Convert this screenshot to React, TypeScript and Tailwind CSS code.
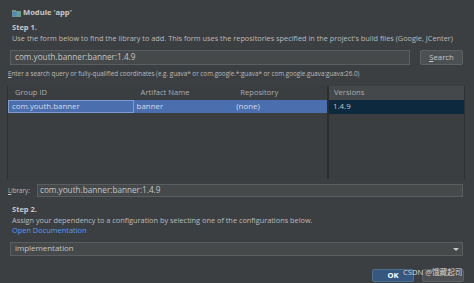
const font = "font-['Open_Sans','Noto_Sans_CJK_SC',sans-serif]"

function ModuleIcon() {
  return (
    <svg width="9" height="8" viewBox="0 0 9 8" className="shrink-0">
      <path d="M0 1h3.5l1 1H9v6H0z" fill="#6e9a8c" />
      <rect x="0.5" y="3" width="4" height="4.5" fill="#4a88c7" />
    </svg>
  )
}

function Column({ width, header, cell, focused }: { width: string; header: string; cell: string; focused?: boolean }) {
  return (
    <div className={`flex flex-col ${width}`}>
      <div className="h-[14px] flex items-center pl-[7px] text-[7.6px] text-[#a9adb0]">{header}</div>
      <div className={`h-[13px] flex items-center pl-[3px] bg-[#4b6eaf] text-[7.9px] text-[#d5dbe6] ${focused ? 'border border-[#7f9bd2]' : ''}`}>
        {cell}
      </div>
    </div>
  )
}

export default function App() {
  return (
    <div className={`relative w-[474px] h-[283px] overflow-hidden bg-[#3c3f41] text-[#bbbbbb] ${font}`}>
      <div className="mt-[6px] h-[14px] flex items-center gap-[2px] pl-[12px]">
        <ModuleIcon />
        <span className="text-[7.6px] font-bold text-[#c8c8c8]">Module 'app'</span>
      </div>

      <div className="h-[13px] mt-[1px] flex items-center pl-[12px] text-[7.5px] font-bold text-[#c8c8c8]">Step 1.</div>
      <div className="h-[8px] flex items-center pl-[12px] text-[7.35px] leading-[8px] whitespace-nowrap">
        Use the form below to find the library to add. This form uses the repositories specified in the project's build files (Google, JCenter)
      </div>

      <div className="mt-[8px] h-[15px] flex items-stretch pl-[10px] pr-[11px] gap-[10px]">
        <div className="flex-1 flex items-center border border-[#5b5e60] bg-[#45494a] pl-[4px] text-[8.2px] text-[#c4c4c4]">
          com.youth.banner:banner:1.4.9
        </div>
        <div className="w-[43px] flex items-center justify-center border border-[#5e6162] bg-[#4c5052] rounded-[2px] text-[7.8px] text-[#c4c4c4]">
          <span><span className="underline">S</span>earch</span>
        </div>
      </div>

      <div className="mt-[4px] h-[10px] flex items-center pl-[8px] text-[6.3px] whitespace-nowrap">
        <span><span className="underline">E</span>nter a search query or fully-qualified coordinates (e.g. guava* or com.google.*:guava* or com.google.guava:guava:26.0)</span>
      </div>

      <div className="mt-[7px] h-[93px] ml-[7px] w-[458px] flex">
        <div className="w-[320px] flex border-l border-[#2f3133] bg-[#3b3e40]">
          <Column width="w-[126px]" header="Group ID" cell="com.youth.banner" focused />
          <Column width="w-[100px]" header="Artifact Name" cell="banner" />
          <Column width="w-[94px]" header="Repository" cell="(none)" />
        </div>
        <div className="w-[2px] bg-[#2b2d2f]" />
        <div className="flex-1 flex flex-col border-r border-[#2f3133] bg-[#3b3e40]">
          <div className="h-[14px] flex items-center pl-[5px] bg-[#45484a] text-[7.6px] text-[#a9adb0]">Versions</div>
          <div className="h-[14px] flex items-center pl-[4px] bg-[#0d293e] text-[7.9px] text-[#c0c6cc]">1.4.9</div>
        </div>
      </div>

      <div className="mt-[5px] h-[13px] flex items-stretch pl-[8px] pr-[11px] gap-[6px]">
        <div className="flex items-center text-[6.2px] w-[23px]">
          <span><span className="underline">L</span>ibrary:</span>
        </div>
        <div className="flex-1 flex items-center border border-[#5b5e60] bg-[#45494a] pl-[2px] text-[8.2px] text-[#c4c4c4]">
          com.youth.banner:banner:1.4.9
        </div>
      </div>

      <div className="mt-[6px] h-[13px] flex items-center pl-[12px] text-[7.5px] font-bold text-[#c8c8c8]">Step 2.</div>
      <div className="h-[8px] flex items-center pl-[12px] text-[7.35px] leading-[8px] whitespace-nowrap">
        Assign your dependency to a configuration by selecting one of the configurations below.
      </div>
      <div className="mt-[2px] h-[10px] flex items-center pl-[12px] text-[7.4px] text-[#589df6]">Open Documentation</div>

      <div className="mt-[6px] mr-[11px] ml-[10px] h-[14px] flex border border-[#5b5e60] bg-[#45494a]">
        <div className="flex-1 flex items-center pl-[4px] text-[7.9px] text-[#c4c4c4]">implementation</div>
        <div className="w-[12px] flex items-center justify-center">
          <div className="w-0 h-0 border-l-[3px] border-r-[3px] border-t-[3px] border-l-transparent border-r-transparent border-t-[#c8c8c8]" />
        </div>
      </div>

      <div className="mt-[13px] h-[13px] flex justify-end gap-[8px] pr-[10px]">
        <div className="w-[42px] flex items-center justify-center rounded-[2px] bg-[#365880] border border-[#4c708c] text-[7.6px] font-bold text-white">OK</div>
        <div className="w-[42px] rounded-[2px] bg-[#4c5052] border border-[#5e6162]" />
      </div>

      <div className="absolute left-[403px] top-[267px] text-[7.6px] text-white/85 whitespace-nowrap [text-shadow:0_0_1px_rgba(0,0,0,0.6)]">
        CSDN @饿藏起司
      </div>
    </div>
  )
}
